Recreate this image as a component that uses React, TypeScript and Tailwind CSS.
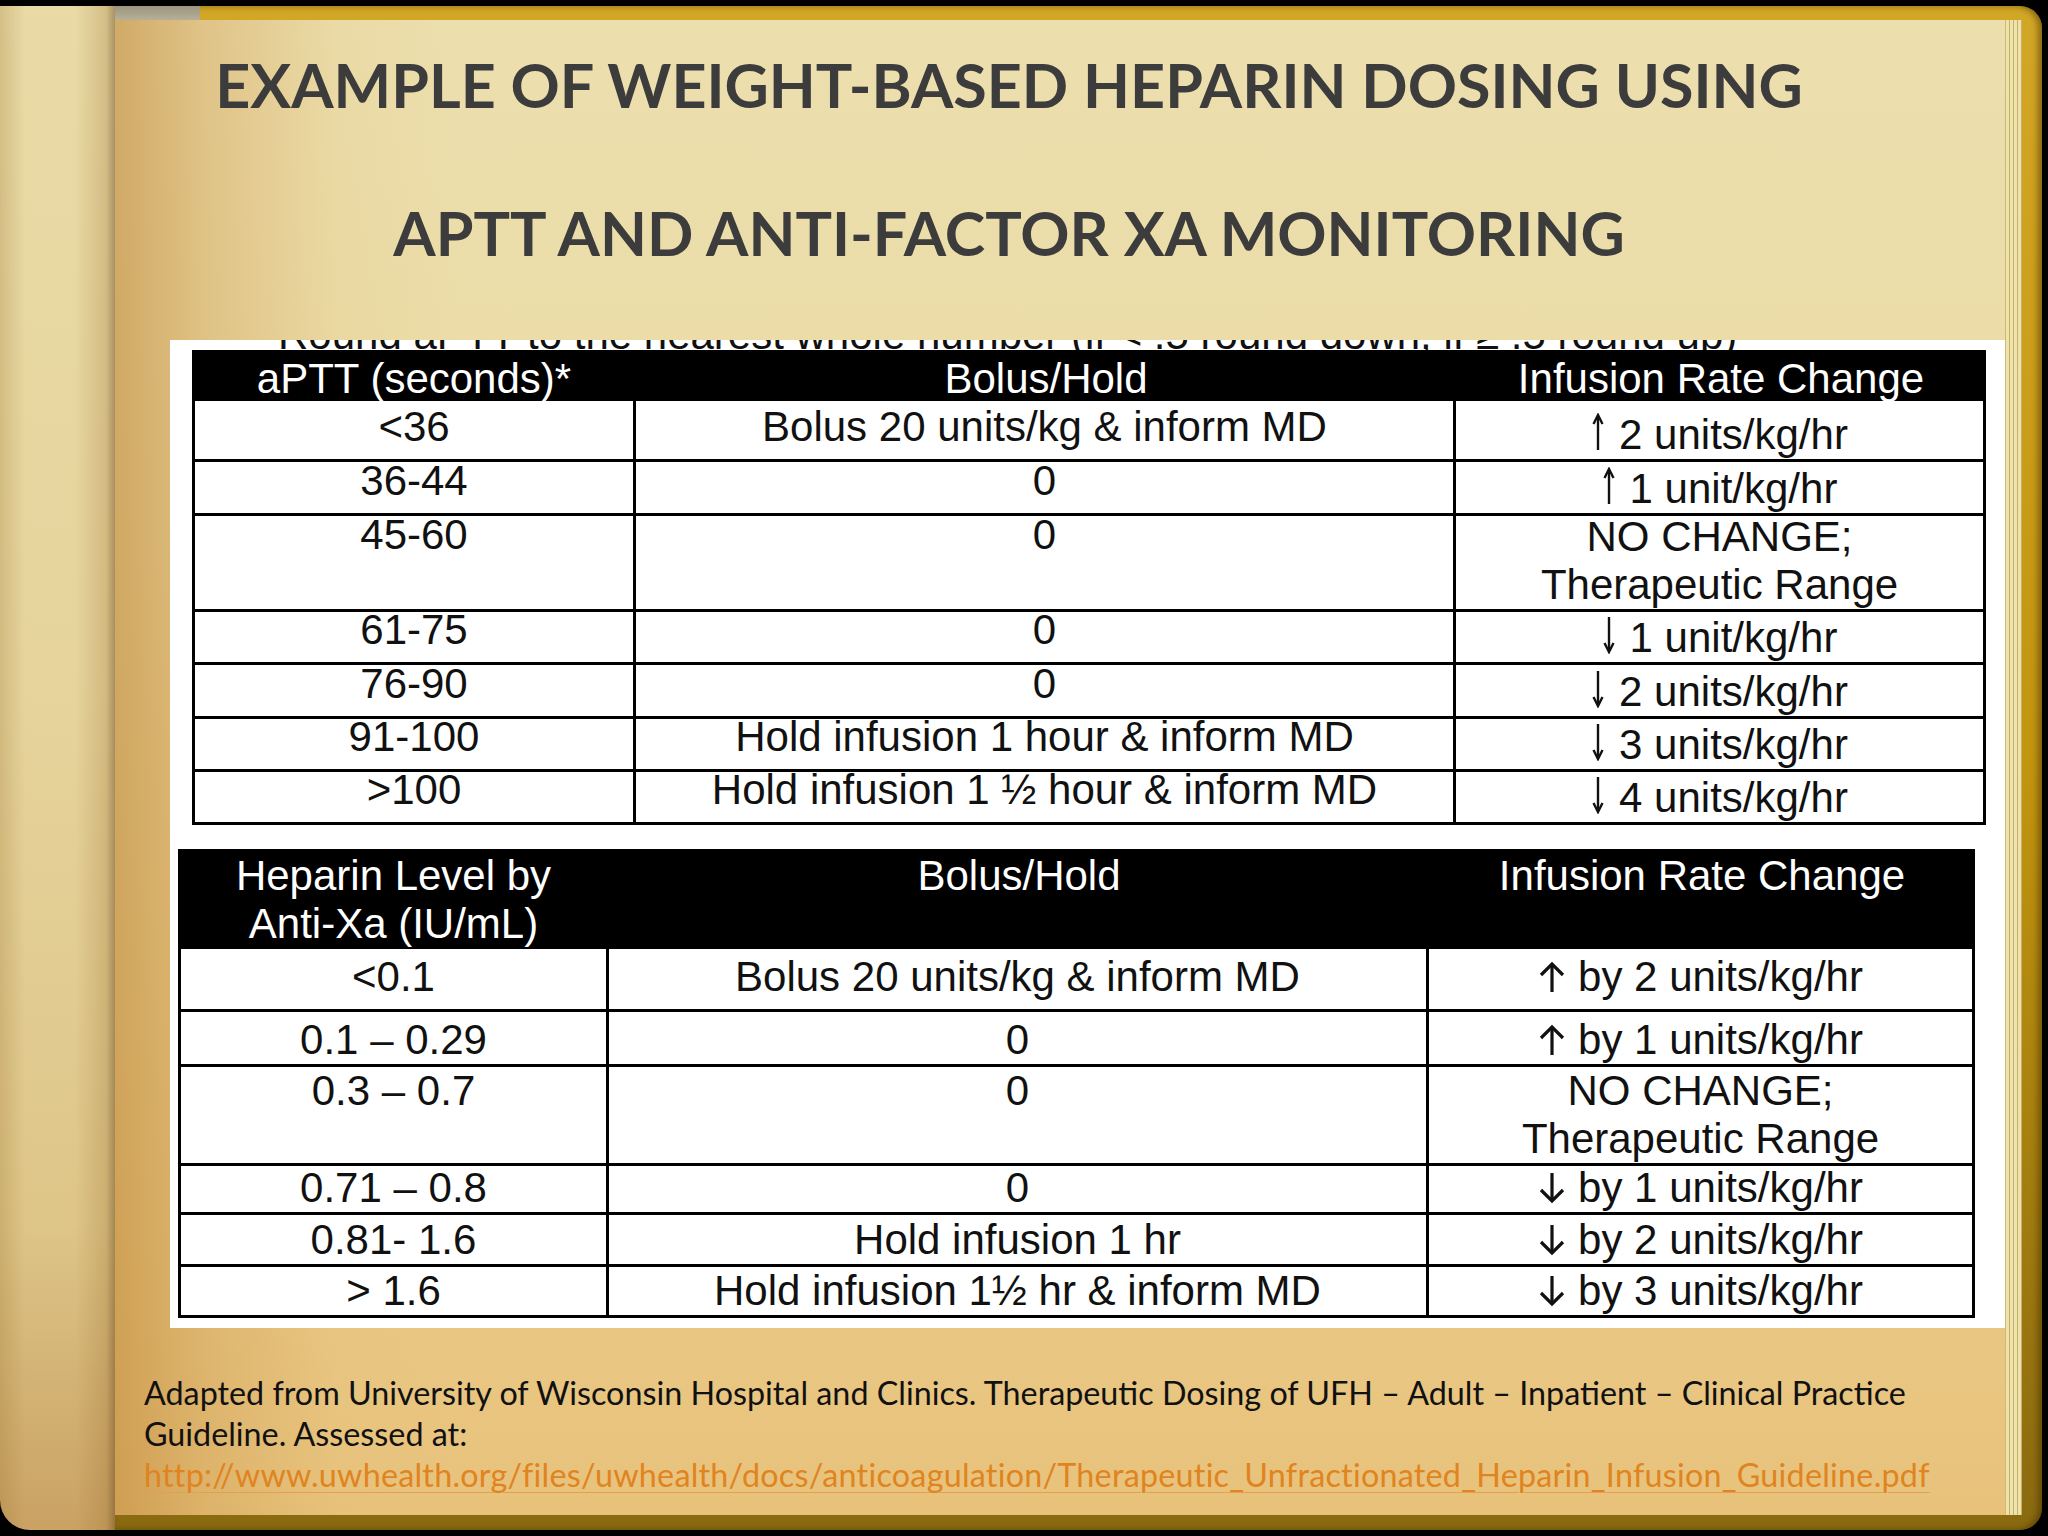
import React from "react";

type Dir = "up" | "down" | null;

function ThinArrow({ dir }: { dir: "up" | "down" }) {
  return (
    <svg width="14" height="38" viewBox="0 0 14 38" className="shrink-0 mr-[14px]">
      {dir === "up" ? (
        <>
          <line x1="7" y1="3" x2="7" y2="37" stroke="#111" strokeWidth="2.4" />
          <path d="M2.5 11 L7 2 L11.5 11" fill="none" stroke="#111" strokeWidth="2.4" />
        </>
      ) : (
        <>
          <line x1="7" y1="1" x2="7" y2="35" stroke="#111" strokeWidth="2.4" />
          <path d="M2.5 27 L7 36 L11.5 27" fill="none" stroke="#111" strokeWidth="2.4" />
        </>
      )}
    </svg>
  );
}

function WideArrow({ dir }: { dir: "up" | "down" }) {
  return (
    <svg width="28" height="32" viewBox="0 0 28 32" className="shrink-0 mr-[12px]">
      {dir === "up" ? (
        <>
          <line x1="14" y1="3" x2="14" y2="31" stroke="#111" strokeWidth="3.2" />
          <path d="M3 14 L14 3 L25 14" fill="none" stroke="#111" strokeWidth="3.2" />
        </>
      ) : (
        <>
          <line x1="14" y1="1" x2="14" y2="29" stroke="#111" strokeWidth="3.2" />
          <path d="M3 18 L14 29 L25 18" fill="none" stroke="#111" strokeWidth="3.2" />
        </>
      )}
    </svg>
  );
}

type Row = { a: string; b: string; dir: Dir; c: string[]; h: string };

const t1: Row[] = [
  { a: "<36", b: "Bolus 20 units/kg & inform MD", dir: "up", c: ["2 units/kg/hr"], h: "h-[54px]" },
  { a: "36-44", b: "0", dir: "up", c: ["1 unit/kg/hr"], h: "h-[54px]" },
  { a: "45-60", b: "0", dir: null, c: ["NO CHANGE;", "Therapeutic Range"], h: "h-[95px]" },
  { a: "61-75", b: "0", dir: "down", c: ["1 unit/kg/hr"], h: "h-[54px]" },
  { a: "76-90", b: "0", dir: "down", c: ["2 units/kg/hr"], h: "h-[53px]" },
  { a: "91-100", b: "Hold infusion 1 hour & inform MD", dir: "down", c: ["3 units/kg/hr"], h: "h-[53px]" },
  { a: ">100", b: "Hold infusion 1 \u00BD hour & inform MD", dir: "down", c: ["4 units/kg/hr"], h: "h-[54px]" },
];

const t2: Row[] = [
  { a: "<0.1", b: "Bolus 20 units/kg & inform MD", dir: "up", c: ["by 2 units/kg/hr"], h: "h-[63px]" },
  { a: "0.1 \u2013 0.29", b: "0", dir: "up", c: ["by 1 units/kg/hr"], h: "h-[51px]" },
  { a: "0.3 \u2013 0.7", b: "0", dir: null, c: ["NO CHANGE;", "Therapeutic Range"], h: "h-[97px]" },
  { a: "0.71 \u2013 0.8", b: "0", dir: "down", c: ["by 1 units/kg/hr"], h: "h-[52px]" },
  { a: "0.81- 1.6", b: "Hold infusion 1 hr", dir: "down", c: ["by 2 units/kg/hr"], h: "h-[51px]" },
  { a: "> 1.6", b: "Hold infusion 1\u00BD hr & inform MD", dir: "down", c: ["by 3 units/kg/hr"], h: "h-[51px]" },
];

function Table1() {
  return (
    <div className="ml-[22px] w-[1794px] font-['Liberation_Sans',Arial,sans-serif] text-[42px] leading-[48px] text-[#111]">
      <div className="h-[51px] bg-black grid grid-cols-[444px_820px_530px] text-white">
        <div className="text-center pt-[5px]">aPTT (seconds)*</div>
        <div className="text-center pt-[5px]">Bolus/Hold</div>
        <div className="text-center pt-[5px]">Infusion Rate Change</div>
      </div>
      {t1.map((r, i) => (
        <div key={i} className={`grid grid-cols-[444px_820px_530px] ${r.h}`}>
          <div className="border-l-[3px] border-r-[3px] border-b-[3px] border-black text-center pt-[2px]">{r.a}</div>
          <div className="border-r-[3px] border-b-[3px] border-black text-center pt-[2px]">{r.b}</div>
          <div className="border-r-[3px] border-b-[3px] border-black flex flex-col items-center pt-[4px]">
            {r.dir ? (
              <div className="flex items-center">
                <ThinArrow dir={r.dir} />
                <span className="mt-[6px]">{r.c[0]}</span>
              </div>
            ) : (
              r.c.map((l, j) => <div key={j}>{l}</div>)
            )}
          </div>
        </div>
      ))}
    </div>
  );
}

function Table2() {
  return (
    <div className="ml-[8px] w-[1797px] font-['Liberation_Sans',Arial,sans-serif] text-[42px] leading-[48px] text-[#111]">
      <div className="h-[100px] bg-black grid grid-cols-[431px_820px_546px] text-white">
        <div className="text-center pt-[3px]">
          <div>Heparin Level by</div>
          <div>Anti-Xa (IU/mL)</div>
        </div>
        <div className="text-center pt-[3px]">Bolus/Hold</div>
        <div className="text-center pt-[3px]">Infusion Rate Change</div>
      </div>
      {t2.map((r, i) => (
        <div key={i} className={`grid grid-cols-[431px_820px_546px] ${r.h}`}>
          <div className="border-l-[3px] border-r-[3px] border-b-[3px] border-black text-center pt-[4px]">{r.a}</div>
          <div className="border-r-[3px] border-b-[3px] border-black text-center pt-[4px]">{r.b}</div>
          <div className="border-r-[3px] border-b-[3px] border-black flex flex-col items-center pt-[4px]">
            {r.dir ? (
              <div className="flex items-center">
                <WideArrow dir={r.dir} />
                <span>{r.c[0]}</span>
              </div>
            ) : (
              r.c.map((l, j) => <div key={j}>{l}</div>)
            )}
          </div>
        </div>
      ))}
    </div>
  );
}

export default function App() {
  return (
    <div className="w-[2048px] h-[1536px] bg-black flex pt-[6px] pb-[6px] pr-[6px] overflow-hidden">
      {/* left curled page */}
      <div className="w-[115px] h-full shrink-0 rounded-bl-[30px] bg-[linear-gradient(90deg,rgba(150,110,40,0.25)_0px,rgba(120,80,20,0)_25px,rgba(120,80,20,0)_75px,rgba(150,105,40,0.25)_106px,rgba(90,60,20,0.45)_115px),linear-gradient(180deg,#e9daa6_0%,#e6d49c_45%,#dec588_80%,#c9a264_100%)]" />
      {/* book frame */}
      <div className="flex-1 h-full flex flex-col rounded-tr-[22px] rounded-br-[22px] bg-[linear-gradient(180deg,#d3a726_0%,#c2950f_50%,#8a6a10_100%)] pt-[14px] pb-[15px] pr-[20px] shadow-[inset_-4px_0_6px_rgba(60,40,0,0.5)]">
        <div className="h-0 flex">
          <div className="w-[85px] h-[14px] -mt-[14px] bg-[linear-gradient(180deg,#9c9580,#b7af97)]" />
        </div>
        <div className="flex-1 flex">
          {/* main page */}
          <div className="flex-1 flex flex-col bg-[linear-gradient(90deg,rgba(190,135,55,0.6)_0px,rgba(205,155,80,0.4)_90px,rgba(225,190,120,0.15)_220px,rgba(230,200,130,0)_340px),linear-gradient(180deg,#ecdfae_0%,#ebdba4_35%,#eace8e_70%,#e8c27b_100%)]">
            {/* title */}
            <div className="ml-[15px] w-[1758px] pt-[29px] font-['Lato',sans-serif] font-bold text-[61px] leading-[72px] text-[#3c3c3c] text-center">
              <div className="whitespace-nowrap">EXAMPLE OF WEIGHT-BASED HEPARIN DOSING USING</div>
              <div className="whitespace-nowrap mt-[76px]">APTT AND ANTI-FACTOR XA MONITORING</div>
            </div>
            {/* white figure */}
            <div className="ml-[55px] mt-[71px] h-[988px] bg-white flex flex-col">
              <div className="h-[10px] overflow-hidden">
                <div className="ml-[108px] -mt-[29px] whitespace-nowrap font-['Liberation_Sans',Arial,sans-serif] text-[42px] leading-[48px] text-[#111]">
                  Round aPTT to the nearest whole number (if &lt; .5 round down, if &ge; .5 round up)
                </div>
              </div>
              <Table1 />
              <div className="h-[31px]" />
              <Table2 />
            </div>
            {/* footer */}
            <div className="ml-[29px] mt-[44px] font-['Lato',sans-serif] text-[32.3px] leading-[41px] text-[#111] whitespace-nowrap">
              <div>Adapted from University of Wisconsin Hospital and Clinics. Therapeutic Dosing of UFH &ndash; Adult &ndash; Inpatient &ndash; Clinical Practice</div>
              <div>Guideline. Assessed at:</div>
              <div className="text-[#e0841f] tracking-[0.24px] underline decoration-1 underline-offset-[5px] decoration-[#e4a050]">
                http://www.uwhealth.org/files/uwhealth/docs/anticoagulation/Therapeutic_Unfractionated_Heparin_Infusion_Guideline.pdf
              </div>
            </div>
          </div>
          {/* page edges */}
          <div className="w-[17px] bg-[repeating-linear-gradient(90deg,#efe3ac_0px,#efe3ac_3px,#c9ae6c_3px,#c9ae6c_4px)] border-l border-[#d0b877]" />
        </div>
      </div>
    </div>
  );
}
